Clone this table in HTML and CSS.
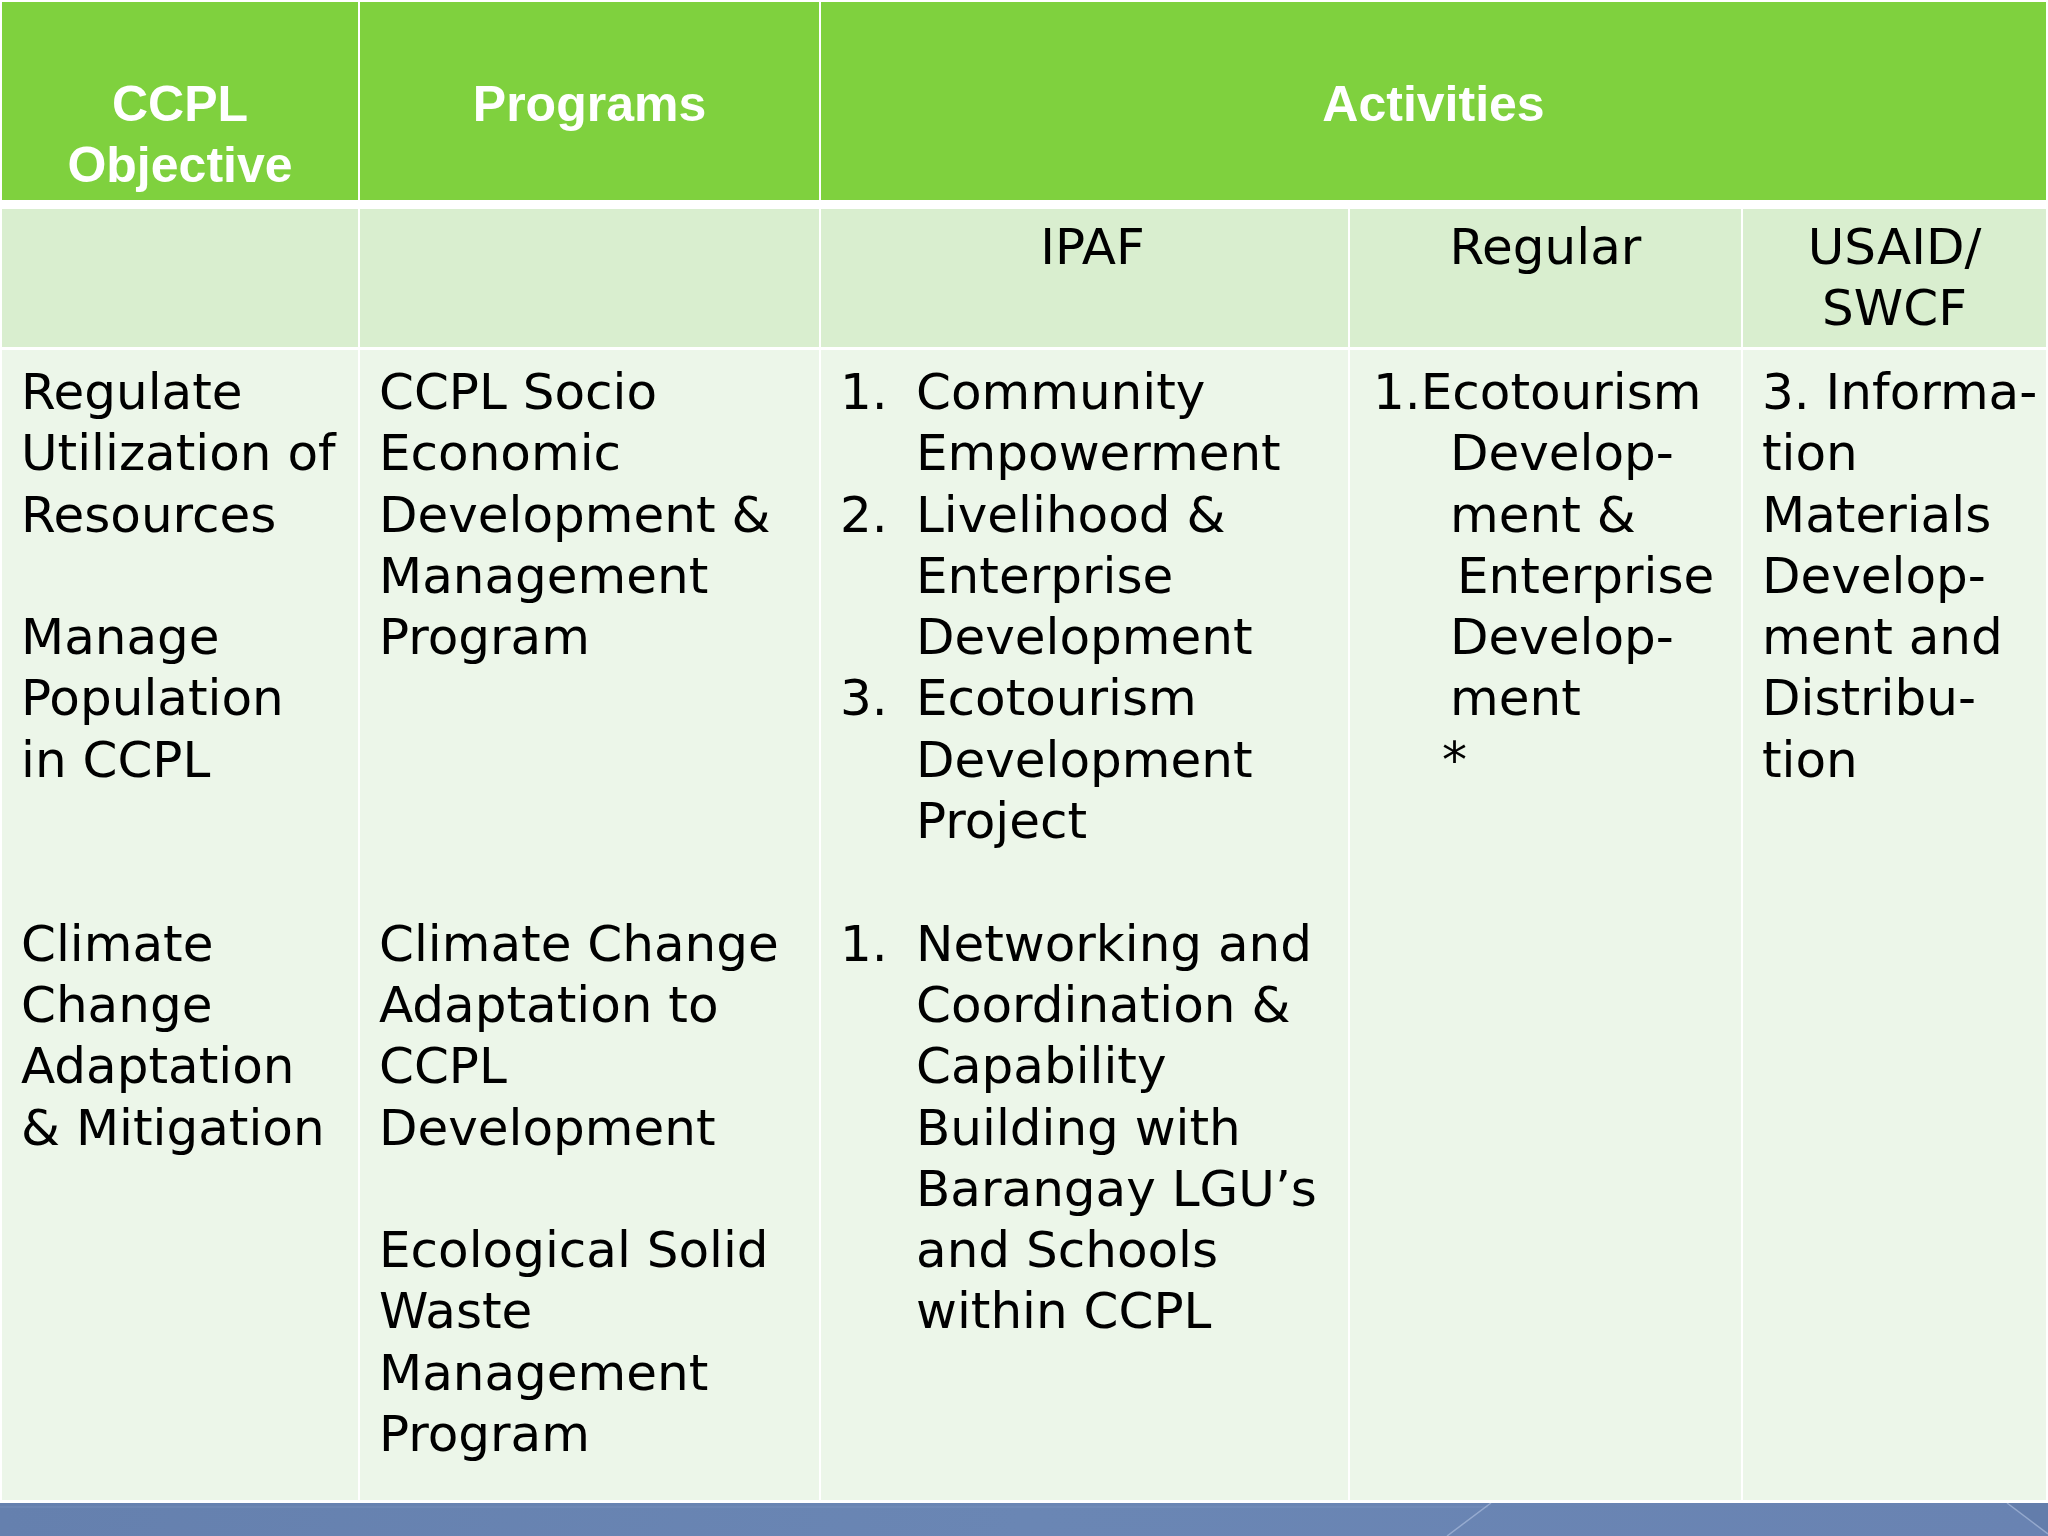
FILE: index.html
```html
<!DOCTYPE html>
<html lang="en">
<head>
<meta charset="utf-8">
<title>CCPL Objectives, Programs and Activities</title>
<link rel="stylesheet" href="styles.css">
</head>
<body>
<div class="slide">
  <div class="grid">
    <div class="cell head">CCPL<br>Objective</div>
    <div class="cell head">Programs</div>
    <div class="cell head span3">Activities</div>

    <div class="cell sub"></div>
    <div class="cell sub"></div>
    <div class="cell sub center ipaf">IPAF</div>
    <div class="cell sub center">Regular</div>
    <div class="cell sub center">USAID/<br>SWCF</div>

    <div class="cell body">
      <p>Regulate<br>Utilization of<br>Resources</p>
      <p class="gap1">Manage<br>Population<br>in CCPL</p>
      <p class="gap2">Climate<br>Change<br>Adaptation<br>&amp; Mitigation</p>
    </div>
    <div class="cell body">
      <p>CCPL Socio<br>Economic<br>Development &amp;<br>Management<br>Program</p>
      <p class="gap4">Climate Change<br>Adaptation to<br>CCPL<br>Development</p>
      <p class="gap1">Ecological Solid<br>Waste<br>Management<br>Program</p>
    </div>
    <div class="cell body">
      <div class="item"><span class="num">1.</span><span class="txt">Community<br>Empowerment</span></div>
      <div class="item"><span class="num">2.</span><span class="txt">Livelihood &amp;<br>Enterprise<br>Development</span></div>
      <div class="item"><span class="num">3.</span><span class="txt">Ecotourism<br>Development<br>Project</span></div>
      <div class="item gap1"><span class="num">1.</span><span class="txt">Networking and<br>Coordination &amp;<br>Capability<br>Building with<br>Barangay LGU’s<br>and Schools<br>within CCPL</span></div>
    </div>
    <div class="cell body regular">
      <div class="line">1.Ecotourism</div>
      <div class="line ind">Develop-</div>
      <div class="line ind">ment &amp;</div>
      <div class="line ind ind-x">Enterprise</div>
      <div class="line ind">Develop-</div>
      <div class="line ind">ment</div>
      <div class="line star">*</div>
    </div>
    <div class="cell body">
      <p>3. Informa-<br>tion<br>Materials<br>Develop-<br>ment and<br>Distribu-<br>tion</p>
    </div>
  </div>
  <div class="band">
    <svg class="band-art" width="2048" height="33" viewBox="0 0 2048 33">
      <polygon points="2007,0 2048,0 2048,31" fill="#5f79a6" opacity="0.55"/>
      <line x1="0" y1="4" x2="1488" y2="4" stroke="#8fa5cc" stroke-width="1" opacity="0.35"/>
      <line x1="1491" y1="0" x2="1447" y2="33" stroke="#a9bbdb" stroke-width="1.5" opacity="0.7"/>
      <line x1="2007" y1="0" x2="2048" y2="31" stroke="#a9bbdb" stroke-width="1.5" opacity="0.7"/>
    </svg>
  </div>
</div>
</body>
</html>
```

FILE: styles.css
```css
html, body {
  margin: 0;
  padding: 0;
  background: #ffffff;
}

.slide {
  width: 2048px;
  height: 1536px;
  display: flex;
  flex-direction: column;
  background: #ffffff;
  overflow: hidden;
}

.grid {
  display: grid;
  grid-template-columns: 356px 459px 527px 391px 303px;
  grid-template-rows: 204px 138px 1150px;
  column-gap: 2px;
  row-gap: 3px;
  padding: 2px 2px 3px 2px;
  background: #ffffff;
}

.cell {
  font-family: "DejaVu Sans", "Liberation Sans", sans-serif;
  font-size: 50px;
  line-height: 61.3px;
  color: #000000;
  white-space: nowrap;
  box-sizing: border-box;
}

.head {
  background: #7fd13e;
  color: #ffffff;
  font-family: "Liberation Sans", Arial, sans-serif;
  font-weight: bold;
  text-align: center;
  padding-top: 72px;
  margin-bottom: 6px;
}

.span3 {
  grid-column: 3 / span 3;
}

.sub {
  background: #d9eecf;
  padding-top: 8px;
}

.center {
  text-align: center;
}

.ipaf {
  padding-left: 16px;
}

.body {
  background: #ecf6e9;
  padding: 12px 0 0 19px;
}

.body.regular {
  padding-left: 23px;
}

.body p {
  margin: 0;
}

.gap1 {
  margin-top: 61.3px !important;
}

.gap2 {
  margin-top: 122.6px !important;
}

.gap4 {
  margin-top: 245.2px !important;
}

.item {
  display: flex;
}

.num {
  width: 76px;
  flex: none;
}

.ind {
  padding-left: 77px;
}

.ind-x {
  padding-left: 84px;
}

.star {
  padding-left: 69px;
}

.band {
  flex: 1;
  position: relative;
  background: linear-gradient(90deg, #6580ae 0%, #6a86b4 50%, #6983b2 100%);
}

.band-art {
  position: absolute;
  left: 0;
  top: 0;
  display: block;
}
```
